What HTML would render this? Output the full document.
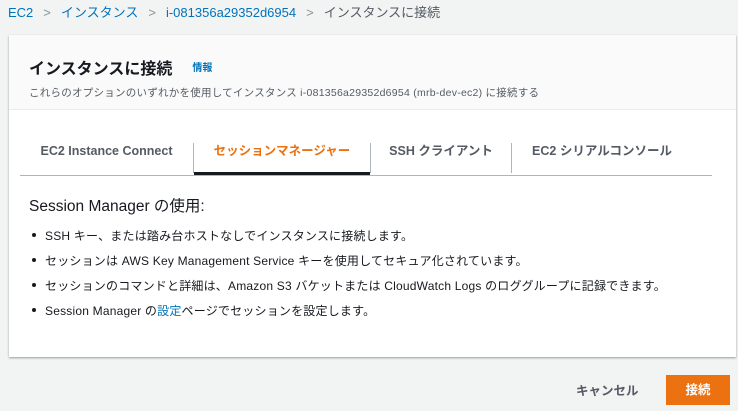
<!DOCTYPE html>
<html><head><meta charset="utf-8"><style>
*{margin:0;padding:0;box-sizing:border-box}
body{width:738px;height:411px;background:#f2f3f3;font-family:"Liberation Sans","Noto Sans CJK JP",sans-serif;color:#16191f;position:relative;overflow:hidden}
.bc{position:absolute;top:2px;left:8px;font-size:13px;color:#545b64;white-space:nowrap}
.bc a{color:#0073bb}
.bc .s{color:#879596;margin:0 10px}
.panel{position:absolute;left:9px;top:35px;width:727px;height:322px;background:#fff;box-shadow:0 1px 2px rgba(0,28,36,.4);}
.hd{height:75px;background:#fafafa;border-bottom:1px solid #eaeded;padding:20px 0 0 20px}
.hd h1{font-size:16px;font-weight:bold;display:inline-block}
.hd .info{font-size:10px;color:#0073bb;font-weight:bold;margin-left:20px;vertical-align:3px}
.hd p{font-size:10.5px;color:#545b64;margin-top:6px;letter-spacing:0.25px;white-space:nowrap}
.tabs{position:absolute;left:11px;top:100px;width:692px;height:41px;border-bottom:1px solid #aab7b8}
.tab{position:absolute;top:0;height:40px;font-size:12.5px;font-weight:bold;color:#545b64;line-height:32px;text-align:center}
.sep{position:absolute;top:8px;width:1px;height:30px;background:#aab7b8}
.act{color:#ec7211;border-bottom:3px solid #16191f}
.body{position:absolute;left:20px;top:159px}
.body h2{font-size:15.5px;font-weight:normal;margin-bottom:11px}
.body li{font-size:12px;list-style:none;position:relative;padding-left:16px;height:25px;white-space:nowrap;letter-spacing:0.2px}
.body li:before{content:"";position:absolute;left:3px;top:6px;width:4px;height:4px;border-radius:50%;background:#16191f}
.cancel{position:absolute;left:576px;top:380px;font-size:12.5px;font-weight:bold;color:#545b64}
.btn{position:absolute;left:666px;top:375px;width:64px;height:30px;background:#ec7211;color:#fff;font-size:12.5px;font-weight:bold;text-align:center;line-height:30px}
</style></head><body>
<div class="bc"><a>EC2</a><span class="s">&gt;</span><a>インスタンス</a><span class="s">&gt;</span><a>i-081356a29352d6954</a><span class="s">&gt;</span>インスタンスに接続</div>
<div class="panel">
<div class="hd"><h1>インスタンスに接続</h1><span class="info">情報</span>
<p>これらのオプションのいずれかを使用してインスタンス i-081356a29352d6954 (mrb-dev-ec2) に接続する</p></div>
<div class="tabs">
<div class="tab" style="left:0;width:173px">EC2 Instance Connect</div>
<div class="sep" style="left:173px"></div>
<div class="tab act" style="left:174px;width:176px">セッションマネージャー</div>
<div class="sep" style="left:350px"></div>
<div class="tab" style="left:351px;width:140px">SSH クライアント</div>
<div class="sep" style="left:491px"></div>
<div class="tab" style="left:492px;width:180px">EC2 シリアルコンソール</div>
</div>
<div class="body">
<h2>Session Manager の使用:</h2>
<ul>
<li>SSH キー、または踏み台ホストなしでインスタンスに接続します。</li>
<li>セッションは AWS Key Management Service キーを使用してセキュア化されています。</li>
<li>セッションのコマンドと詳細は、Amazon S3 バケットまたは CloudWatch Logs のロググループに記録できます。</li>
<li>Session Manager の<span style="color:#0073bb">設定</span>ページでセッションを設定します。</li>
</ul></div>
</div>
<div class="cancel">キャンセル</div>
<div class="btn">接続</div>
</body></html>
